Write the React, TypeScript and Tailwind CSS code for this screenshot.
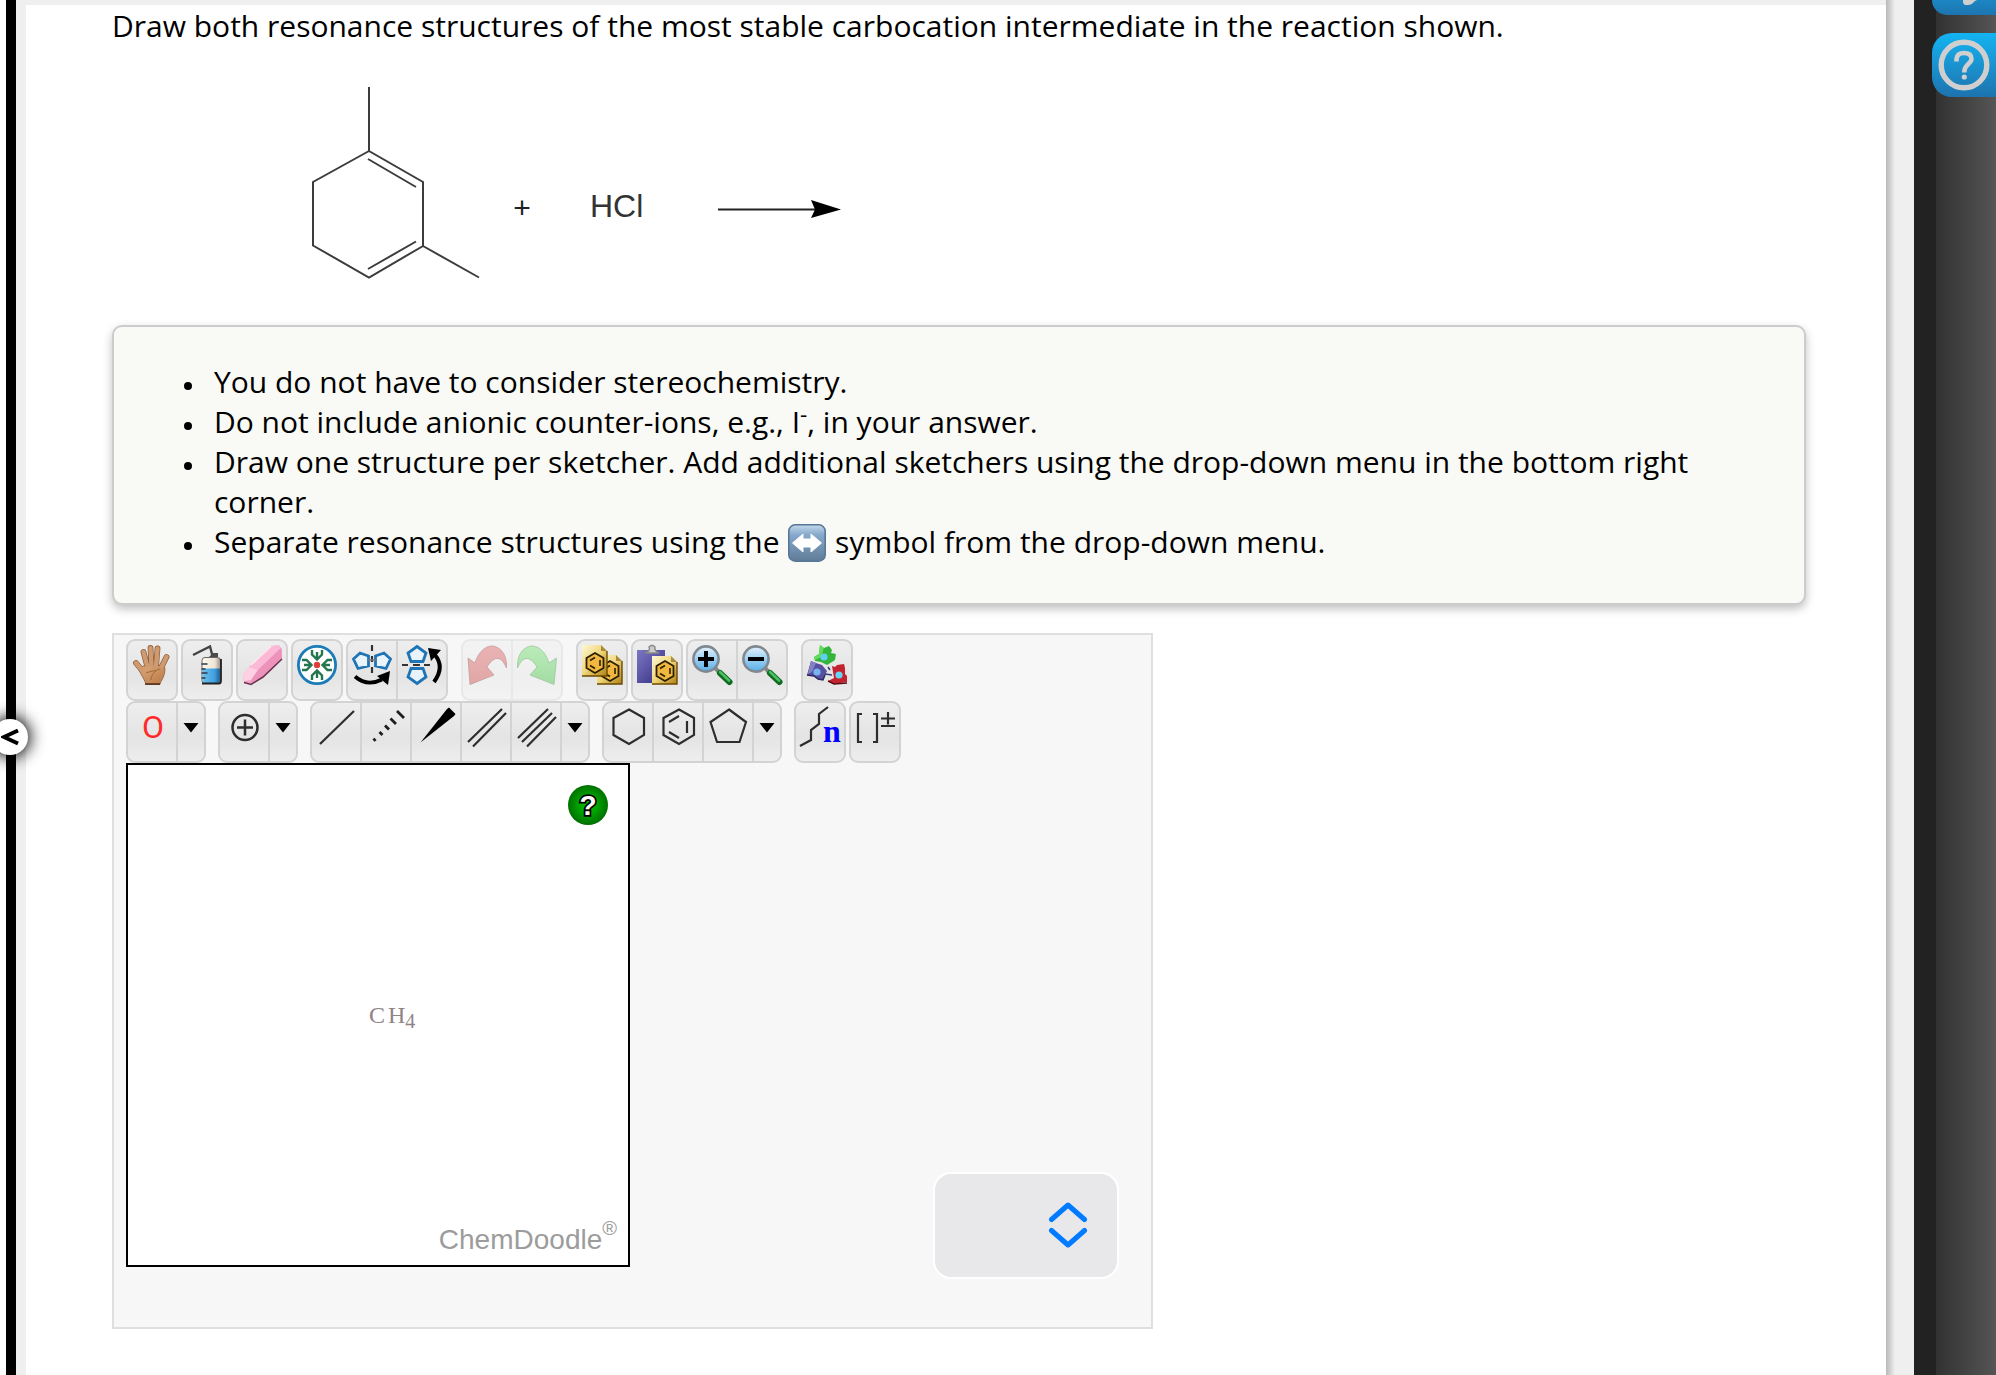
import type { ReactNode } from "react";

/* ---------- toolbar artwork, each drawn on a 40 x 40 grid ---------- */

function Icon({ children }: { children: ReactNode }) {
  return (
    <svg viewBox="0 0 40 40" className="size-10 overflow-visible" aria-hidden="true">
      {children}
    </svg>
  );
}

const handLines = "M16 24 11.5 7M19.5 22 18.5 3M24 22 25.5 3.5M28 25 34.5 12M14 30 4 18";

function HandIcon() {
  return (
    <Icon>
      <defs>
        <linearGradient id="skin" x1="0" y1="0" x2="1" y2="1">
          <stop offset="0" stopColor="#dba67a" />
          <stop offset="1" stopColor="#bb7c48" />
        </linearGradient>
      </defs>
      <path d={handLines} stroke="#8a5c3a" strokeWidth="5.800" strokeLinecap="round" fill="none" />
      <path d="M11 21 30 21 33 23C33 32 29 35 28 39.5L14 39.5C13 35 9 30 7 25Z" fill="url(#skin)" stroke="#8a5c3a" strokeWidth=".8" />
      <path d={handLines} stroke="#cf9a70" strokeWidth="4.400" strokeLinecap="round" fill="none" />
      <path d="M15 22 29 22 31 24 27 37 15 37 10 28Z" fill="url(#skin)" />
      <path d="M13 39h15" stroke="#4d2c14" strokeWidth="1.500" />
      <path d="M14 28c4-2 10-2 14-4M19 35c0-4 2-7 5-9" stroke="#a56a3c" strokeWidth="1" fill="none" />
    </Icon>
  );
}

function BottleIcon() {
  return (
    <Icon>
      <defs>
        <linearGradient id="glass" x1="0" x2="1">
          <stop offset="0" stopColor="#fffaf0" />
          <stop offset=".7" stopColor="#efe3d6" />
          <stop offset="1" stopColor="#9b8f86" />
        </linearGradient>
        <linearGradient id="water" x1="0" x2="1">
          <stop offset="0" stopColor="#6cc0ee" />
          <stop offset=".7" stopColor="#3f9fdc" />
          <stop offset="1" stopColor="#1c5f96" />
        </linearGradient>
      </defs>
      <path d="M6 10 23 1.500 25.500 11" fill="none" stroke="#444" strokeWidth="2.400" />
      <path d="M26 8h5v4h-9z" fill="#4a4a4a" />
      <rect x="15" y="12.500" width="18.500" height="26" rx="3" fill="url(#glass)" stroke="#6a6460" strokeWidth="1" />
      <path d="M15.600 23.500h17.300V36q0 2-2.400 2H18q-2.400 0-2.400-2z" fill="url(#water)" />
      <path d="M15 38.500h17q2 0 2-3V14" fill="none" stroke="#222" strokeWidth="1.800" />
      <path d="M14.500 19h6M14.500 24h4M14.500 28h6M14.500 33h4" stroke="#2b3a46" strokeWidth="1.400" />
    </Icon>
  );
}

function EraserIcon() {
  return (
    <Icon>
      <path d="M1 30 7 22 29 1 37 .5 40 4V14L21 32 9 39.500 2 37.500Z" fill="#f2a2c6" />
      <path d="M7 22 29 1 37 .5 39 3 16 25Z" fill="#fbb9d6" />
      <path d="M1 30 7 22 16 25 9 35 2 36Z" fill="#ffd0e4" />
      <path d="M16 25 39 3 40 14 21 32 9 39 10 34Z" fill="#ec92bb" />
      <path d="M40 14 21 32 9 39.500 2 37.500" fill="none" stroke="#6b3550" strokeWidth="1.600" />
      <path d="M9 20 29 1.500" stroke="#ffe6f1" strokeWidth="1.600" />
    </Icon>
  );
}

const quarterTurns = ["rotate(0 20 20)", "rotate(90 20 20)", "rotate(180 20 20)", "rotate(270 20 20)"];

function CenterIcon() {
  return (
    <Icon>
      <circle cx="20" cy="20" r="18.600" fill="#fff" stroke="#1c7cb8" strokeWidth="2.800" />
      {quarterTurns.map((turn) => (
        <path
          key={turn}
          d="M15 5V9.500L20 14.500 25 9.500V5M20 7V15"
          transform={turn}
          fill="none"
          stroke="#23774f"
          strokeWidth="2.400"
        />
      ))}
      <circle cx="20" cy="20" r="3.200" fill="#e0403a" />
    </Icon>
  );
}

function FlipHorizontalIcon() {
  return (
    <Icon>
      <path d="M1.500 14 8 8 16.500 11V21L6 23.500ZM38.500 14 32 8 23.500 11V21L34 23.500Z" fill="#e8f3fb" stroke="#1f74b5" strokeWidth="2.800" />
      <path d="M20 0v6M20 11v6M20 22v6" stroke="#333" strokeWidth="2.200" />
      <path d="M16 15h8" stroke="#777" strokeWidth="1.400" />
      <path d="M3 31.500Q15 42 30 34.500" fill="none" stroke="#000" strokeWidth="3.800" />
      <path d="M38 26 25 31 36 40Z" />
    </Icon>
  );
}

function FlipVerticalIcon() {
  return (
    <Icon>
      <path d="M15 1.500 24 8 21 16.500H9L6 8ZM15 38.500 24 32 21 23.500H9L6 32Z" fill="#e8f3fb" stroke="#1f74b5" strokeWidth="2.800" />
      <path d="M0 20h6M11 20h7M22 20h6" stroke="#333" strokeWidth="2.200" />
      <path d="M32 37Q43 22 33 10" fill="none" stroke="#000" strokeWidth="4" />
      <path d="M26 3 39 5 29 16Z" />
    </Icon>
  );
}

function UndoIcon() {
  return (
    <Icon>
      <defs>
        <linearGradient id="undo" x1="0" y1="0" x2="0" y2="1">
          <stop offset="0" stopColor="#d85050" />
          <stop offset="1" stopColor="#c03030" />
        </linearGradient>
      </defs>
      <path d="M3 39.500 1 13 8 18C12 5 20 .5 26 1 36 3 40 12 39.500 23 35 12 28 9 20 22L27 30Z" fill="url(#undo)" stroke="#7d1515" strokeWidth=".8" />
    </Icon>
  );
}

function RedoIcon() {
  return (
    <Icon>
      <defs>
        <linearGradient id="redo" x1="0" y1="0" x2="0" y2="1">
          <stop offset="0" stopColor="#60dc60" />
          <stop offset="1" stopColor="#28b428" />
        </linearGradient>
      </defs>
      <path d="M37 39.500 39.500 13 32 18C28 5 20 .5 14 1 4 3 0 12 .5 23 5 12 12 9 20 22L13 30Z" fill="url(#redo)" stroke="#157d15" strokeWidth=".8" />
    </Icon>
  );
}

function RingPage({ x, y, height }: { x: number; y: number; height: number }) {
  return (
    <g transform={`translate(${x} ${y})`}>
      <path d={`M0 0H19L25 6V${height}H0Z`} fill="url(#page)" />
      <path d={`M25 6V${height}H0`} fill="none" stroke="#6b4a00" strokeWidth="1.400" />
      <path d="M19 0V6H25Z" fill="#a88a42" />
      <g transform={`translate(13 ${height - 13})`}>
        <path d="M0-10 8.500-5V5L0 10-8.500 5V-5Z" fill="#f0b840" stroke="#2c2000" strokeWidth="1.800" />
        <path d="M-5-2.500 0-5.500M5-3V3M-5 2.500 0 5.500" stroke="#2c2000" strokeWidth="1.600" />
      </g>
    </g>
  );
}

function CopyIcon() {
  return (
    <Icon>
      <defs>
        <linearGradient id="page" x1="0" y1="0" x2="1" y2="1">
          <stop offset="0" stopColor="#fdf8d8" />
          <stop offset=".5" stopColor="#efd676" />
          <stop offset="1" stopColor="#b07f14" />
        </linearGradient>
      </defs>
      <RingPage x={15} y={10} height={29} />
      <RingPage x={0} y={0} height={31} />
    </Icon>
  );
}

function PasteIcon() {
  return (
    <Icon>
      <defs>
        <linearGradient id="board" x1="0" y1="0" x2="1" y2="1">
          <stop offset="0" stopColor="#7d78c4" />
          <stop offset="1" stopColor="#332c80" />
        </linearGradient>
      </defs>
      <rect y="5" width="28" height="33" fill="url(#board)" />
      <path d="M8 8Q14 6 12 2L14 .5H16L18 2Q17 6 22 8Z" fill="#ccc" stroke="#888" strokeWidth="1.400" />
      <RingPage x={15} y={11} height={28} />
    </Icon>
  );
}

function Magnifier({ plus }: { plus: boolean }) {
  return (
    <Icon>
      <defs>
        <linearGradient id="lens" x1="0" y1="0" x2="0" y2="1">
          <stop offset="0" stopColor="#e3f2fc" />
          <stop offset="1" stopColor="#58aee8" />
        </linearGradient>
      </defs>
      <path d="M23 23 28 28" stroke="#888" strokeWidth="4" />
      <path d="M28 28 37.500 37" stroke="#0d6b22" strokeWidth="6" strokeLinecap="round" />
      <path d="M28 27 37 35.500" stroke="#4cc060" strokeWidth="2.600" strokeLinecap="round" />
      <circle cx="14" cy="14" r="12.600" fill="url(#lens)" stroke="#808890" strokeWidth="2.600" />
      <path d={plus ? "M6 14H22M14 6V22" : "M6 14H22"} stroke="#000" strokeWidth="4" />
    </Icon>
  );
}

function TemplatesIcon() {
  return (
    <Icon>
      <path d="M13 0 17 3 22 1 25 5 24 8 29 9 28 15 25 17 20 20 14 17 8 16 7 12 12 9Z" fill="#33b53c" />
      <path d="M13 0 17 3 14 12 8 15 7 12 12 9Z" fill="#63dc5c" />
      <path d="M4 16 9 18 15 20 20 26 16 35 11 34 7 31 0 30Z" fill="#5551a0" />
      <path d="M4 16 9 18 5 27 1 29Z" fill="#8480c4" />
      <path d="M0 30 7 31 11 34 16 35 18 30" fill="none" stroke="#2c2860" strokeWidth="1.400" />
      <path d="M25 21 28 22 30 20 37 19 38 23V29L40 31V37L33 38 27 39 21 36 27 33Z" fill="#c4222e" />
      <path d="M21 36 27 39 40 38" fill="none" stroke="#5a0b12" strokeWidth="1.400" />
      <path d="M21 22 23 25M18 29 25 30" stroke="#3a3a7a" strokeWidth="1.600" fill="none" />
      <circle cx="17" cy="12" r="3.600" fill="#5fd0f0" />
      <circle cx="10" cy="27" r="3.600" fill="#78b4f0" />
      <circle cx="32" cy="30" r="3.600" fill="#66d4f4" />
    </Icon>
  );
}

function LineIcon({ d }: { d: string }) {
  return (
    <Icon>
      <path d={d} fill="none" stroke="#2e2e2e" strokeWidth="2.200" />
    </Icon>
  );
}

function OxygenIcon() {
  return (
    <Icon>
      <text
        x="21"
        y="31"
        textAnchor="middle"
        fill="#ff2a2a"
        className="font-['Roboto',sans-serif] text-[32px]"
      >
        O
      </text>
    </Icon>
  );
}

function ChargeIcon() {
  return (
    <Icon>
      <circle cx="21" cy="20.500" r="12.500" fill="none" stroke="#2e2e2e" strokeWidth="2.500" />
      <path d="M13 20.500H29M21 12.500V28.500" stroke="#2e2e2e" strokeWidth="2.500" />
    </Icon>
  );
}

function RecessedIcon() {
  return (
    <Icon>
      <path d="M7.500 31.500 9.500 34M13.500 25 16.500 28M19 18.500 23 22.500M24.500 11.500 30 17M31 4 38 11" stroke="#1e1e1e" strokeWidth="2.800" />
    </Icon>
  );
}

function WedgeIcon() {
  return (
    <Icon>
      <path d="M4.500 35.500 31 2 33 .5 39.500 7 38 9Z" />
    </Icon>
  );
}

function PolymerIcon() {
  return (
    <Icon>
      <path d="M0 39 11 33V23L19 17V7L28 0" fill="none" stroke="#2e2e2e" strokeWidth="2.200" />
      <text x="23" y="35" fill="#0000ff" className="font-['Liberation_Serif',serif] text-[32px] font-bold">
        n
      </text>
    </Icon>
  );
}

/* ---------- toolbar building blocks ---------- */

type Tool = { label: string; icon: ReactNode; narrow?: boolean };

const dropArrow = (
  <svg viewBox="0 0 16 40" className="h-10 w-4" aria-hidden="true">
    <path d="M.5 16H15.500L8 25.500Z" />
  </svg>
);

function ToolSet({ tools, disabled }: { tools: Tool[]; disabled?: boolean }) {
  return (
    <div
      className={
        disabled
          ? "flex overflow-hidden rounded-[9px] border-2 border-[#d3d3d3] bg-linear-to-b from-[#eeeeee] via-[#e4e4e4] via-60% to-[#eeeeee] opacity-40"
          : "flex overflow-hidden rounded-[9px] border-2 border-[#d3d3d3] bg-linear-to-b from-[#eeeeee] via-[#e4e4e4] via-60% to-[#eeeeee]"
      }
    >
      {tools.map((tool) => (
        <button
          key={tool.label}
          type="button"
          aria-label={tool.label}
          disabled={disabled}
          className={
            tool.narrow
              ? "flex h-[58px] w-7 items-start justify-center border-l-2 border-[#d3d3d3] pt-1"
              : "flex h-[58px] items-start border-l-2 border-[#d3d3d3] px-1 pt-1 first:border-l-0"
          }
        >
          {tool.icon}
        </button>
      ))}
    </div>
  );
}

const editGroups: { disabled?: boolean; sets: Tool[][] }[] = [
  {
    sets: [
      [{ label: "Move", icon: <HandIcon /> }],
      [{ label: "Clear", icon: <BottleIcon /> }],
      [{ label: "Erase", icon: <EraserIcon /> }],
      [{ label: "Center", icon: <CenterIcon /> }],
      [
        { label: "Flip horizontally", icon: <FlipHorizontalIcon /> },
        { label: "Flip vertically", icon: <FlipVerticalIcon /> },
      ],
    ],
  },
  {
    disabled: true,
    sets: [
      [
        { label: "Undo", icon: <UndoIcon /> },
        { label: "Redo", icon: <RedoIcon /> },
      ],
    ],
  },
  {
    sets: [
      [{ label: "Copy", icon: <CopyIcon /> }],
      [{ label: "Paste", icon: <PasteIcon /> }],
      [
        { label: "Zoom in", icon: <Magnifier plus /> },
        { label: "Zoom out", icon: <Magnifier plus={false} /> },
      ],
    ],
  },
  { sets: [[{ label: "Templates", icon: <TemplatesIcon /> }]] },
];

const hexagon = "M21 2.500 36 11V28L21 37 5.500 28V11Z";

const drawGroups: Tool[][][] = [
  [
    [
      { label: "Oxygen", icon: <OxygenIcon /> },
      { label: "More elements", icon: dropArrow, narrow: true },
    ],
  ],
  [
    [
      { label: "Increase charge", icon: <ChargeIcon /> },
      { label: "More attributes", icon: dropArrow, narrow: true },
    ],
  ],
  [
    [
      { label: "Single bond", icon: <LineIcon d="M4 37 38 4" /> },
      { label: "Recessed bond", icon: <RecessedIcon /> },
      { label: "Protruding bond", icon: <WedgeIcon /> },
      { label: "Double bond", icon: <LineIcon d="M2 35 36 2M7 39.500 40 6" /> },
      { label: "Triple bond", icon: <LineIcon d="M2 31 32 2M6 35 36 6M11 39.500 40 10" /> },
      { label: "More bonds", icon: dropArrow, narrow: true },
    ],
  ],
  [
    [
      { label: "Cyclohexane ring", icon: <LineIcon d={hexagon} /> },
      { label: "Benzene ring", icon: <LineIcon d={hexagon + "M11 15 21 9M29 14V26M11 25 21 31"} /> },
      { label: "Cyclopentane ring", icon: <LineIcon d="M21 2.500 38 15 31.500 35H9L2.500 15Z" /> },
      { label: "More rings", icon: dropArrow, narrow: true },
    ],
  ],
  [
    [{ label: "Repeating chain", icon: <PolymerIcon /> }],
    [{ label: "Bracket charge", icon: <LineIcon d="M7 7H3V35H7M18 7H22V35H18M26 11.500H40M33 5V17.500M26 19H40" /> }],
  ],
];

/* ---------- page content ---------- */

function Reaction() {
  return (
    <svg
      viewBox="112 46 780 259"
      className="mb-5 h-[259px] w-[780px] max-w-full"
      role="img"
      aria-label="1,3-dimethylcyclohexa-1,3-diene plus HCl, reaction arrow"
    >
      <path
        d="M369 87V151L423 182V246L369 277.500 313 245.500V182L369 151M423 246 479 277.500M368 159 416 187M416 241.500 368 269"
        fill="none"
        stroke="#3c3c3c"
        strokeWidth="2"
      />
      <text x="522" y="218" textAnchor="middle" fill="#222" className="font-['Liberation_Sans',sans-serif] text-[30px]">
        +
      </text>
      <text x="590" y="217" fill="#333" className="font-['Liberation_Sans',sans-serif] text-[32px]">
        HCl
      </text>
      <path d="M718 209.500H818" stroke="#222" strokeWidth="2.200" />
      <path d="M811 200 841 209.500 811 218 815 209.500Z" />
    </svg>
  );
}

function LeftRightSymbol() {
  return (
    <svg viewBox="0 0 38 38" className="mx-px inline-block size-[38px] align-bottom" role="img" aria-label="left-right arrow">
      <defs>
        <linearGradient id="emoji" x1="0" y1="0" x2="0" y2="1">
          <stop offset="0" stopColor="#c3d8ec" />
          <stop offset=".28" stopColor="#86a8cb" />
          <stop offset="1" stopColor="#5f7b97" />
        </linearGradient>
      </defs>
      <rect x=".8" y=".8" width="36.400" height="36.400" rx="6.500" fill="url(#emoji)" stroke="#587796" strokeWidth="1.600" />
      <path d="M4.500 19 15 10V15H23V10L33.500 19 23 28V23H15V28Z" fill="#fff" stroke="#fff" strokeWidth="1" strokeLinejoin="round" />
    </svg>
  );
}

function Note({ children }: { children: ReactNode }) {
  return (
    <li className="relative before:absolute before:top-5 before:-left-[30px] before:size-2 before:rounded-full before:bg-black">
      {children}
    </li>
  );
}

function Sketcher() {
  return (
    <section className="mt-7 w-[1041px] max-w-full border-2 border-[#dfdfdf] bg-[#f7f7f7] pt-1 pb-12 pl-3">
      <div className="flex gap-[13px]">
        {editGroups.map((group) => (
          <div key={group.sets[0][0].label} className="flex gap-[3px]">
            {group.sets.map((set) => (
              <ToolSet key={set[0].label} tools={set} disabled={group.disabled} />
            ))}
          </div>
        ))}
      </div>
      <div className="flex gap-3">
        {drawGroups.map((group) => (
          <div key={group[0][0].label} className="flex gap-[3px]">
            {group.map((set) => (
              <ToolSet key={set[0].label} tools={set} />
            ))}
          </div>
        ))}
      </div>
      <div className="flex items-end justify-between pr-8">
        <div className="relative mb-3 size-[504px] border-2 border-black bg-white">
          <button type="button" aria-label="Sketcher help" className="absolute top-5 right-5 size-10">
            <svg viewBox="0 0 40 40" className="size-10" aria-hidden="true">
              <defs>
                <radialGradient id="help">
                  <stop offset="0" stopColor="#00c400" />
                  <stop offset=".5" stopColor="#00a000" />
                  <stop offset="1" stopColor="#007000" />
                </radialGradient>
              </defs>
              <circle cx="20" cy="20" r="20" fill="url(#help)" />
              <text
                x="20"
                y="30"
                textAnchor="middle"
                fill="#fff"
                stroke="#000"
                strokeWidth="3.500"
                paintOrder="stroke"
                className="font-['Liberation_Sans',sans-serif] text-[28px] font-bold"
              >
                ?
              </text>
            </svg>
          </button>
          <div className="absolute top-[234px] left-[241px] flex gap-[3px] font-['Liberation_Serif',serif] text-[24px] leading-8 text-[#8f8484]">
            <span>C</span>
            <span>
              H<sub className="text-[20px]">4</sub>
            </span>
          </div>
          <div className="absolute right-[11px] bottom-[9px] font-['Liberation_Sans',sans-serif] text-[28px] leading-8 text-[#9c9c9c]">
            ChemDoodle<sup className="-top-[14px] text-[20px]">®</sup>
          </div>
        </div>
        <div className="relative">
          <select
            aria-label="Add a sketcher or symbol"
            className="block h-[107px] w-[186px] appearance-none rounded-[18px] border-2 border-white bg-[#e8e8ea]"
          >
            <option value=""></option>
          </select>
          <svg
            viewBox="0 0 40 48"
            className="pointer-events-none absolute top-[29px] right-[31px] h-12 w-10"
            fill="none"
            stroke="#007aff"
            strokeWidth="5"
            strokeLinecap="round"
            strokeLinejoin="round"
            aria-hidden="true"
          >
            <path d="M3.500 18.500 20 4 36.500 18.500M3.500 29.500 20 44 36.500 29.500" />
          </svg>
        </div>
      </div>
    </section>
  );
}

export default function App() {
  return (
    <div className="flex min-h-screen overflow-hidden bg-white font-['Open_Sans',sans-serif] text-[30px] leading-10 text-black">
      <div className="relative w-4 shrink-0 border-l-[6px] border-white bg-black">
        <button
          type="button"
          aria-label="Collapse panel"
          className="absolute top-[719px] -left-[14px] z-10 flex size-9 items-center justify-end rounded-full bg-white pr-[9px] shadow-[0_0_16px_2px_#000]"
        >
          <svg viewBox="0 0 18 18" className="size-[18px]" fill="none" stroke="#000" strokeWidth="4" aria-hidden="true">
            <path d="M17 2.500 3 9 17 15.500" />
          </svg>
        </button>
      </div>

      <div className="flex flex-1 bg-[#efefef] pl-[10px]">
        <main className="mt-[5px] flex-1 bg-white pt-px pr-20 pl-[86px]">
          <p>Draw both resonance structures of the most stable carbocation intermediate in the reaction shown.</p>
          <Reaction />
          <div className="rounded-[10px] border-2 border-[#cccccc] bg-[#f9faf5] pt-[35px] pr-10 pb-[41px] pl-[100px] shadow-[0_4px_10px_rgba(0,0,0,0.25)]">
            <ul>
              <Note>You do not have to consider stereochemistry.</Note>
              <Note>
                Do not include anionic counter-ions, e.g., I<sup>-</sup>, in your answer.
              </Note>
              <Note>
                Draw one structure per sketcher. Add additional sketchers using the drop-down menu in the bottom right
                corner.
              </Note>
              <Note>
                Separate resonance structures using the <LeftRightSymbol /> symbol from the drop-down menu.
              </Note>
            </ul>
          </div>
          <Sketcher />
        </main>
        <div className="w-7 shrink-0 bg-linear-to-r from-[#b8b8b8] to-[#efefef] to-[9px]" />
      </div>

      <aside className="relative w-[82px] shrink-0 border-l-[22px] border-[#222222] bg-linear-to-r from-[#323232] to-[#555555]">
        <div className="absolute top-0 right-0 flex w-16 flex-col gap-[18px]">
          <button
            type="button"
            aria-label="Resources"
            className="flex h-[15px] items-start justify-center rounded-bl-[20px] bg-linear-to-b from-[#1b86c2] to-[#1c75b0]"
          >
            <svg viewBox="0 0 16 5" className="ml-3 h-[5px] w-4" aria-hidden="true">
              <path d="M1 0H15Q12 1 11 3 9 5 6 5H3Q1 4 1 2Z" fill="#d0d0d0" />
            </svg>
          </button>
          <button
            type="button"
            aria-label="Help"
            className="flex h-16 items-center rounded-l-[20px] bg-linear-to-b from-[#12b4f2] to-[#1c73ae] pl-[6px]"
          >
            <svg viewBox="0 0 52 52" className="size-[52px]" fill="none" stroke="#cfcfcf" aria-hidden="true">
              <circle cx="26" cy="26" r="22.800" strokeWidth="5.400" />
              <path d="M18.500 22.500V20Q19 14 26 14 33.500 14 33.500 20C33.500 25 26 25 26.300 33.500" strokeWidth="4.600" />
              <circle cx="26.300" cy="38" r="2.600" fill="#cfcfcf" stroke="none" />
            </svg>
          </button>
        </div>
      </aside>
    </div>
  );
}
